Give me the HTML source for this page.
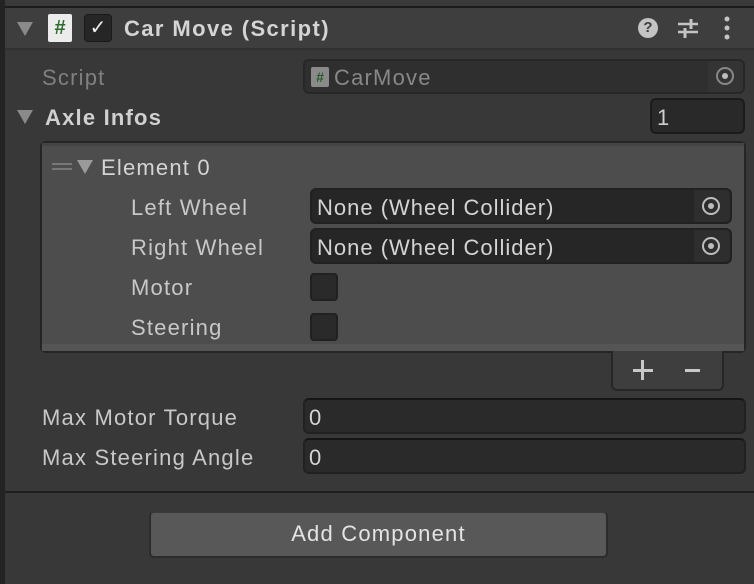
<!DOCTYPE html>
<html><head><style>
*{box-sizing:border-box;margin:0;padding:0}
body{width:754px;height:584px;background:#383838;position:relative;overflow:hidden;font-family:"Liberation Sans",sans-serif;font-size:22px;letter-spacing:1.2px;color:#c8c8c8}
.a{position:absolute}
.tri{position:absolute;width:0;height:0;border-left:8px solid transparent;border-right:8px solid transparent;border-top:14px solid #8a8a8a}
.lbl{position:absolute;line-height:26px;white-space:nowrap}
.fld{position:absolute;background:#2a2a2a;border:2px solid #212121;border-radius:6px}
.tgt{position:absolute;width:18px;height:18px;border:2px solid #bdbdbd;border-radius:50%}
.tgt:after{content:"";position:absolute;left:4px;top:4px;width:6px;height:6px;border-radius:50%;background:#bdbdbd}
</style></head><body>
<div class="a" style="left:0;top:0;width:5px;height:584px;background:#232323"></div>
<div class="a" style="left:5px;top:0;width:749px;height:6px;background:#3a3a3a"></div>
<div class="a" style="left:5px;top:6px;width:749px;height:2px;background:#1c1c1c"></div>
<div class="a" style="left:5px;top:8px;width:749px;height:40px;background:#3e3e3e"></div>
<div class="a" style="left:5px;top:48px;width:749px;height:2px;background:#303030"></div>
<div class="tri" style="left:17px;top:22px"></div>
<div class="a" style="left:48px;top:14px;width:24px;height:28px;background:#ececec;border-radius:2px;color:#2f6b2f;font-weight:bold;font-size:20px;letter-spacing:0;text-align:center;line-height:28px">#</div>
<div class="a" style="left:84px;top:14px;width:28px;height:28px;background:#262626;border:1px solid #1a1a1a;border-radius:4px;color:#eee;font-size:20px;letter-spacing:0;text-align:center;line-height:27px">✓</div>
<div class="lbl" style="left:124px;top:16px;font-weight:bold;font-size:22px;letter-spacing:1.4px;color:#d4d4d4">Car Move (Script)</div>
<div class="a" style="left:638px;top:18px;width:20px;height:20px;border-radius:50%;background:#c4c4c4;color:#3e3e3e;font-weight:bold;font-size:15px;letter-spacing:0;text-align:center;line-height:20px">?</div>
<svg class="a" style="left:677px;top:17px" width="22" height="22" viewBox="0 0 22 22"><g stroke="#c4c4c4" stroke-width="2.5"><path d="M1 7h20M1 15h20"/><path d="M14 2v10M8 11v10" stroke-width="3"/></g></svg>
<svg class="a" style="left:722px;top:16px" width="10" height="24"><circle cx="5" cy="3" r="2.5" fill="#c4c4c4"/><circle cx="5" cy="12" r="2.5" fill="#c4c4c4"/><circle cx="5" cy="21" r="2.5" fill="#c4c4c4"/></svg>

<div class="lbl" style="left:42px;top:65px;color:#808080">Script</div>
<div class="fld" style="left:303px;top:59px;width:442px;height:35px;background:#2f2f2f;border-color:#272727"></div>
<div class="a" style="left:708px;top:61px;width:35px;height:31px;background:#343434;border-radius:0 5px 5px 0"></div>
<div class="a" style="left:311px;top:67px;width:18px;height:20px;background:#8a8a8a;border-radius:2px;color:#2c5a2c;font-size:14px;letter-spacing:0;font-weight:bold;text-align:center;line-height:20px">#</div>
<div class="lbl" style="left:334px;top:65px;color:#888">CarMove</div>
<div class="tgt" style="left:716px;top:67px;border-color:#888"></div>

<div class="tri" style="left:17px;top:110px"></div>
<div class="lbl" style="left:45px;top:105px;font-weight:bold;font-size:22px;color:#d0d0d0">Axle Infos</div>
<div class="fld" style="left:650px;top:98px;width:95px;height:36px;background:#292929;border-color:#1b1b1b"></div>
<div class="lbl" style="left:657px;top:105px;color:#d0d0d0">1</div>

<div class="a" style="left:40px;top:141px;width:706px;height:212px;background:#4d4d4d;border:2px solid #252525;border-radius:6px"></div>
<div class="a" style="left:42px;top:143px;width:702px;height:3px;background:#444"></div>
<div class="a" style="left:42px;top:344px;width:702px;height:7px;background:#555"></div>
<div class="a" style="left:52px;top:163px;width:20px;height:2px;background:#777"></div>
<div class="a" style="left:52px;top:168px;width:20px;height:2px;background:#777"></div>
<div class="tri" style="left:77px;top:160px;border-top-color:#9a9a9a"></div>
<div class="lbl" style="left:101px;top:155px;color:#d4d4d4">Element 0</div>
<div class="lbl" style="left:131px;top:195px">Left Wheel</div>
<div class="lbl" style="left:131px;top:235px">Right Wheel</div>
<div class="lbl" style="left:131px;top:275px">Motor</div>
<div class="lbl" style="left:131px;top:315px">Steering</div>
<div class="fld" style="left:310px;top:188px;width:422px;height:36px;background:#262626"></div>
<div class="a" style="left:694px;top:190px;width:36px;height:32px;background:#2e2e2e;border-radius:0 5px 5px 0"></div>
<div class="lbl" style="left:317px;top:195px;color:#d4d4d4;letter-spacing:1px">None (Wheel Collider)</div>
<div class="tgt" style="left:702px;top:197px"></div>
<div class="fld" style="left:310px;top:228px;width:422px;height:36px;background:#262626"></div>
<div class="a" style="left:694px;top:230px;width:36px;height:32px;background:#2e2e2e;border-radius:0 5px 5px 0"></div>
<div class="lbl" style="left:317px;top:235px;color:#d4d4d4;letter-spacing:1px">None (Wheel Collider)</div>
<div class="tgt" style="left:702px;top:237px"></div>
<div class="fld" style="left:310px;top:273px;width:28px;height:28px;border-radius:4px"></div>
<div class="fld" style="left:310px;top:313px;width:28px;height:28px;border-radius:4px"></div>

<div class="a" style="left:611px;top:351px;width:113px;height:40px;background:#3e3e3e;border:2px solid #262626;border-top:none;border-radius:0 0 6px 6px"></div>
<div class="a" style="left:633px;top:369px;width:20px;height:3px;background:#c8c8c8"></div>
<div class="a" style="left:641px;top:360px;width:3px;height:20px;background:#c8c8c8"></div>
<div class="a" style="left:685px;top:369px;width:15px;height:3px;background:#c8c8c8"></div>

<div class="lbl" style="left:42px;top:405px">Max Motor Torque</div>
<div class="fld" style="left:303px;top:398px;width:443px;height:36px;border-top-color:#161616"></div>
<div class="lbl" style="left:309px;top:405px;color:#d4d4d4">0</div>
<div class="lbl" style="left:42px;top:445px">Max Steering Angle</div>
<div class="fld" style="left:303px;top:438px;width:443px;height:36px;border-top-color:#161616"></div>
<div class="lbl" style="left:309px;top:445px;color:#d4d4d4">0</div>

<div class="a" style="left:5px;top:491px;width:749px;height:2px;background:#1e1e1e"></div>
<div class="a" style="left:149px;top:511px;width:459px;height:47px;background:#585858;border:2px solid #2c2c2c;border-top-color:#3a3a3a;border-radius:5px;text-align:center;line-height:42px;color:#e4e4e4;font-size:22px">Add Component</div>
</body></html>
